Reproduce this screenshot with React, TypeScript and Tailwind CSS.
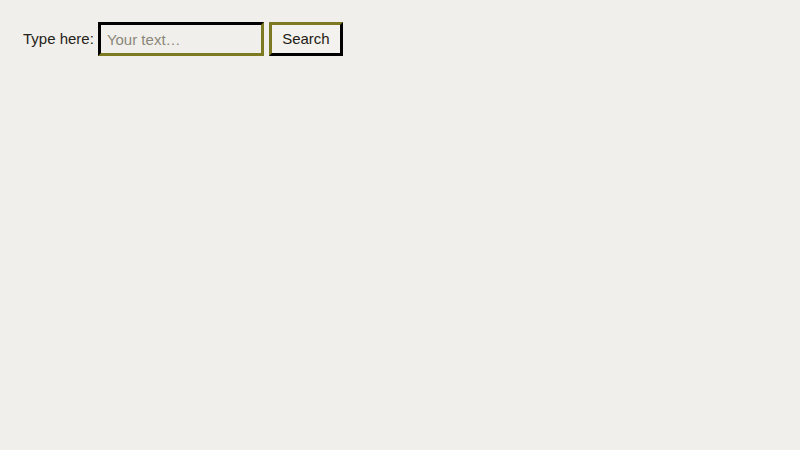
export default function App() {
  return (
    <div className="min-h-[450px] w-full bg-[#f1efeb] px-[23px] pt-[22px] font-['Liberation_Sans',Arial,sans-serif] text-[15px] text-[#26241a]">
      <form className="flex items-center" onSubmit={(e) => e.preventDefault()}>
        <label htmlFor="q" className="mr-[4px]">Type here:</label>
        <input
          id="q"
          type="text"
          placeholder="Your text…"
          className="h-[34px] w-[166px] border-[3px] border-t-black border-l-black border-b-[#7d7a22] border-r-[#7d7a22] bg-[#f1efeb] px-[6px] text-[15px] outline-none placeholder:text-[#8a877a]"
        />
        <button
          type="submit"
          className="ml-[5px] h-[34px] w-[74px] border-[3px] border-t-[#7d7a22] border-l-[#7d7a22] border-b-black border-r-black bg-[#f4f2ee] text-[15px] text-[#1e1c14]"
        >
          Search
        </button>
      </form>
    </div>
  );
}
